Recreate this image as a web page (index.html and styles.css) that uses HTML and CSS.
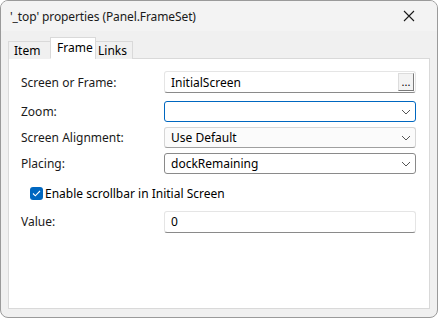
FILE: index.html
```html
<!DOCTYPE html>
<html lang="en">
<head>
  <meta charset="UTF-8" />
  <title>'_top' properties (Panel.FrameSet)</title>
  <link rel="stylesheet" href="styles.css">
</head>
<body>
<div class="window">
  <!-- title bar -->
  <div class="titlebar">
    <span class="title">'_top' properties (Panel.FrameSet)</span>
    <svg class="close" width="12" height="12" viewBox="0 0 12 12"><path d="M1 1L11 11M11 1L1 11" stroke="#1a1a1a" stroke-width="1.1"/></svg>
  </div>

  <!-- tabs -->
  <div class="tabs">
    <div class="tab t-item">Item</div>
    <div class="tab t-frame active">Frame</div>
    <div class="tab t-links">Links</div>
  </div>

  <div class="panel">
    <div class="row r1">
      <label>Screen or Frame:</label>
      <div class="field text">
        <span>InitialScreen</span>
        <button class="dots">...</button>
      </div>
    </div>
    <div class="row">
      <label>Zoom:</label>
      <div class="field combo focus"><span></span><svg class="chev" width="10" height="6" viewBox="0 0 10 6"><path d="M1 1L5 5L9 1" fill="none" stroke="#555" stroke-width="1"/></svg></div>
    </div>
    <div class="row">
      <label>Screen Alignment:</label>
      <div class="field combo soft"><span>Use Default</span><svg class="chev" width="10" height="6" viewBox="0 0 10 6"><path d="M1 1L5 5L9 1" fill="none" stroke="#555" stroke-width="1"/></svg></div>
    </div>
    <div class="row">
      <label>Placing:</label>
      <div class="field combo dark"><span>dockRemaining</span><svg class="chev" width="10" height="6" viewBox="0 0 10 6"><path d="M1 1L5 5L9 1" fill="none" stroke="#555" stroke-width="1"/></svg></div>
    </div>
    <div class="check">
      <span class="box"><svg width="9" height="7" viewBox="0 0 9 7"><path d="M1 3.5L3.3 5.8L8 1" fill="none" stroke="#fff" stroke-width="1.1"/></svg></span>
      <span>Enable scrollbar in Initial Screen</span>
    </div>
    <div class="row">
      <label>Value:</label>
      <div class="field text"><span>0</span></div>
    </div>
  </div>
</div>
</body>
</html>
```

FILE: styles.css
```css
*{box-sizing:border-box;font-family:"Noto Sans","Open Sans",sans-serif}
body{margin:0;background:#fff;color:#000;font-size:12px}
.window{width:438px;height:318px;border:1px solid #9a9a9a;border-radius:8px;background:#f0f0f0;display:flex;flex-direction:column;overflow:hidden}
.titlebar{height:30px;flex:none;display:flex;align-items:center;justify-content:space-between;padding:0 22px 0 9px;background:#f3f3f3}
.title{font-size:12px;color:#1a1a1a;letter-spacing:-0.1px}
.close{display:block}
.tabs{display:flex;align-items:flex-end;padding-left:7px;height:28px;margin-bottom:-1px;position:relative;z-index:1}
.tab{height:18px;border:1px solid #d9d9d9;border-bottom:none;background:#f0f0f0;line-height:18px;margin-right:-1px;padding-left:5px;white-space:nowrap}
.t-item{width:43px}
.t-frame{width:46px}
.t-links{width:38px;padding-left:2px}
.tab.active{height:22px;background:#fff;line-height:19px;border-bottom:1px solid #fff;padding-left:6px}
.panel{flex:1;margin:0 7px 8px 7px;background:#fff;border:1px solid #d9d9d9;padding:12px 13px 0 12px}
.row{display:flex;align-items:center;height:21px;margin-bottom:5px}
.row.r1{height:22px;margin-bottom:8px}
.row label{width:143px;flex:none;color:#1a1a1a}
.field{flex:1;height:100%;display:flex;align-items:center;padding:0 6px;background:#fff;border:1px solid #e5e5e5;border-bottom-color:#8a8a8a;border-radius:3px}
.field span{flex:1}
.field.text{height:22px}
.dots{width:16px;height:18px;margin-right:-5px;padding:0;border:1px solid #dcdcdc;border-right-color:#7a7a7a;border-bottom-color:#7a7a7a;background:#f3f3f3;font-size:11px;line-height:12px;color:#000}
.combo.focus{border:1px solid #0067c0}
.combo.soft{background:#fbfbfb;border-color:#d6d6d6;border-bottom-color:#a0a0a0}
.combo.dark{border-color:#8a8a8a}
.chev{display:block;margin-right:-2px}
.check{display:flex;align-items:center;gap:2px;margin:12px 0 11px 9px;height:14px}
.box{width:13px;height:13px;border-radius:3px;background:#0067c0;display:flex;align-items:center;justify-content:center}
```
